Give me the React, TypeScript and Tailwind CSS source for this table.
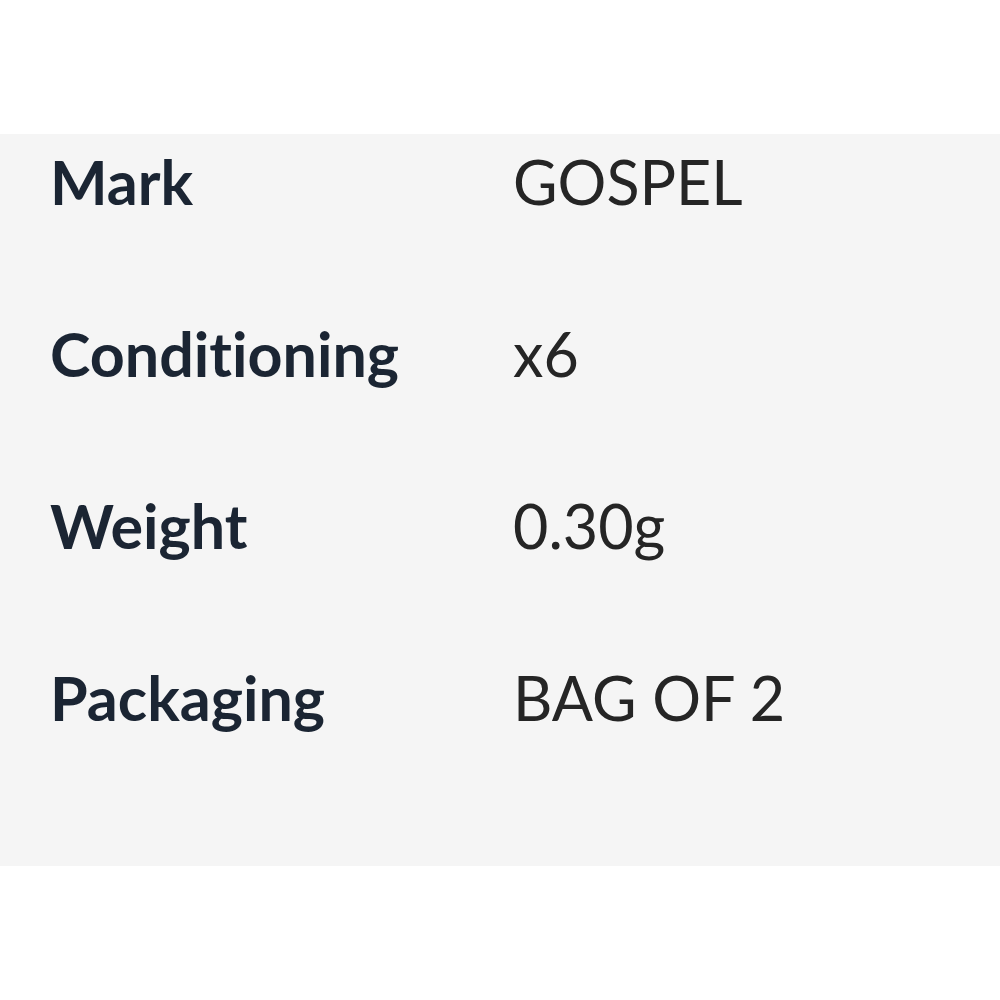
import React from 'react';

const specs = [
  { label: 'Mark', value: 'GOSPEL' },
  { label: 'Conditioning', value: 'x6' },
  { label: 'Weight', value: '0.30g' },
  { label: 'Packaging', value: 'BAG OF 2' },
];

const App: React.FC = () => {
  return (
    <div className="min-h-[1000px] bg-white pt-[134px]" style={{ fontFamily: 'Lato, "Open Sans", sans-serif' }}>
      {/* spec table */}
      <div className="flex h-[732px] flex-col gap-[78px] bg-[#f5f5f5] pl-[50px] [font-variant-ligatures:none]">
        {specs.map((row) => (
          <div key={row.label} className="flex h-[94px] items-center leading-none">
            <div className="w-[463px] text-[61px] font-bold text-[#1b2533]">{row.label}</div>
            <div className="text-[61px] text-[#252525]">{row.value}</div>
          </div>
        ))}
      </div>
    </div>
  );
};

export default App;
